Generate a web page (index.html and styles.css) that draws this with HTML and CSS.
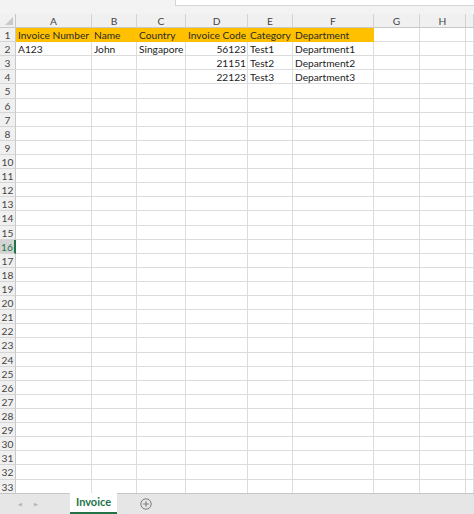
FILE: index.html
```html
<!DOCTYPE html>
<html lang="en">

<head>
    <meta charset="UTF-8">
    <meta name="viewport" content="width=device-width, initial-scale=1.0">
    <title>Invoice</title>
    <link rel="stylesheet" href="styles.css">
</head>

<body>
    <div class="formula-strip">
        <div class="formula-box"></div>
    </div>

    <div class="sheet" id="sheet">
        <div class="corner"><span class="corner-mark"></span></div>
        <div class="col-head">A</div>
        <div class="col-head">B</div>
        <div class="col-head">C</div>
        <div class="col-head">D</div>
        <div class="col-head">E</div>
        <div class="col-head">F</div>
        <div class="col-head">G</div>
        <div class="col-head">H</div>
        <div class="col-head"></div>
    </div>

    <div class="tab-bar">
        <div class="tab-nav">
            <span class="nav-arrow">&#9664;</span>
            <span class="nav-arrow">&#9654;</span>
        </div>
        <div class="sheet-tab">Invoice</div>
        <div class="add-sheet">
            <svg width="12" height="12" viewBox="0 0 12 12">
                <circle cx="6" cy="6" r="5.2" fill="none" stroke="#7a7a7a" stroke-width="1" />
                <path d="M6 3.2v5.6M3.2 6h5.6" stroke="#7a7a7a" stroke-width="1" />
            </svg>
        </div>
    </div>

    <script>
        // Sheet data, one array per row (columns A to F)
        const rows = [
            ['Invoice Number', 'Name', 'Country', 'Invoice Code', 'Category', 'Department'],
            ['A123', 'John', 'Singapore', 56123, 'Test1', 'Department1'],
            ['', '', '', 21151, 'Test2', 'Department2'],
            ['', '', '', 22123, 'Test3', 'Department3']
        ];
        const totalRows = 33;
        const totalCols = 9;
        const selectedRow = 16;

        const sheet = document.getElementById('sheet');

        for (let r = 1; r <= totalRows; r++) {
            const head = document.createElement('div');
            head.className = 'row-head' + (r === selectedRow ? ' selected' : '');
            head.textContent = r;
            sheet.appendChild(head);

            const data = rows[r - 1] || [];
            for (let c = 0; c < totalCols; c++) {
                const cell = document.createElement('div');
                cell.className = 'cell';
                const value = data[c];
                if (r === 1 && c < 6) {
                    cell.classList.add('title');
                }
                if (typeof value === 'number') {
                    cell.classList.add('num');
                }
                if (value !== undefined) {
                    cell.textContent = value;
                }
                sheet.appendChild(cell);
            }
        }
    </script>
</body>

</html>
```

FILE: styles.css
```css
html,
body {
    margin: 0;
    height: 100%;
    overflow: hidden;
}

body {
    font-family: Lato, "Liberation Sans", sans-serif;
    font-size: 10.2px;
    color: #222;
    background: #fff;
    display: flex;
    flex-direction: column;
}

.formula-strip {
    height: 14px;
    background: #f3f3f3;
    display: flex;
    justify-content: flex-end;
}

.formula-box {
    width: 298px;
    height: 5px;
    background: #fff;
    border-left: 1px solid #d4d4d4;
    border-bottom: 1px solid #d4d4d4;
}

.sheet {
    display: grid;
    grid-template-columns: 16px 76px 45px 49px 62px 45px 81px 46px 46px 1fr;
    grid-template-rows: 14px repeat(33, 14.12px);
    flex: 1;
    overflow: hidden;
}

.corner {
    background: #f0f0f0;
    border-right: 1px solid #c8c8c8;
    border-bottom: 1px solid #c8c8c8;
    position: relative;
}

.corner-mark {
    position: absolute;
    right: 2px;
    bottom: 2px;
    width: 0;
    height: 0;
    border-left: 8px solid transparent;
    border-bottom: 8px solid #c9c9c9;
}

.col-head {
    background: #f0f0f0;
    color: #444;
    text-align: center;
    line-height: 14px;
    border-right: 1px solid #d2d2d2;
    border-bottom: 1px solid #c8c8c8;
}

.row-head {
    background: #f0f0f0;
    color: #444;
    text-align: center;
    line-height: 14px;
    border-right: 1px solid #c8c8c8;
    border-bottom: 1px solid #d6d6d6;
}

.row-head.selected {
    background: #d3d3d3;
    color: #217346;
    border-right: 2px solid #217346;
}

.cell {
    border-right: 1px solid #dcdcdc;
    border-bottom: 1px solid #dcdcdc;
    padding: 0 1px 0 2px;
    line-height: 14px;
    white-space: nowrap;
    overflow: hidden;
}

.cell.title {
    background: #ffc000;
    border-right-color: #ffc000;
    border-bottom-color: #ffc000;
    color: #2a2a2a;
}

.cell.num {
    text-align: right;
}

.tab-bar {
    height: 20px;
    flex-shrink: 0;
    background: #e6e6e6;
    border-top: 1px solid #c6c6c6;
    display: flex;
    align-items: stretch;
}

.tab-nav {
    width: 70px;
    display: flex;
    align-items: center;
    gap: 12px;
    padding-left: 18px;
    box-sizing: border-box;
}

.nav-arrow {
    font-size: 5px;
    color: #b5b5b5;
}

.sheet-tab {
    width: 47px;
    background: #fff;
    color: #217346;
    font-size: 11px;
    font-weight: bold;
    text-align: center;
    line-height: 18px;
    border-bottom: 2px solid #217346;
    margin-top: -1px;
}

.add-sheet {
    display: flex;
    align-items: center;
    padding-left: 23px;
}
```
